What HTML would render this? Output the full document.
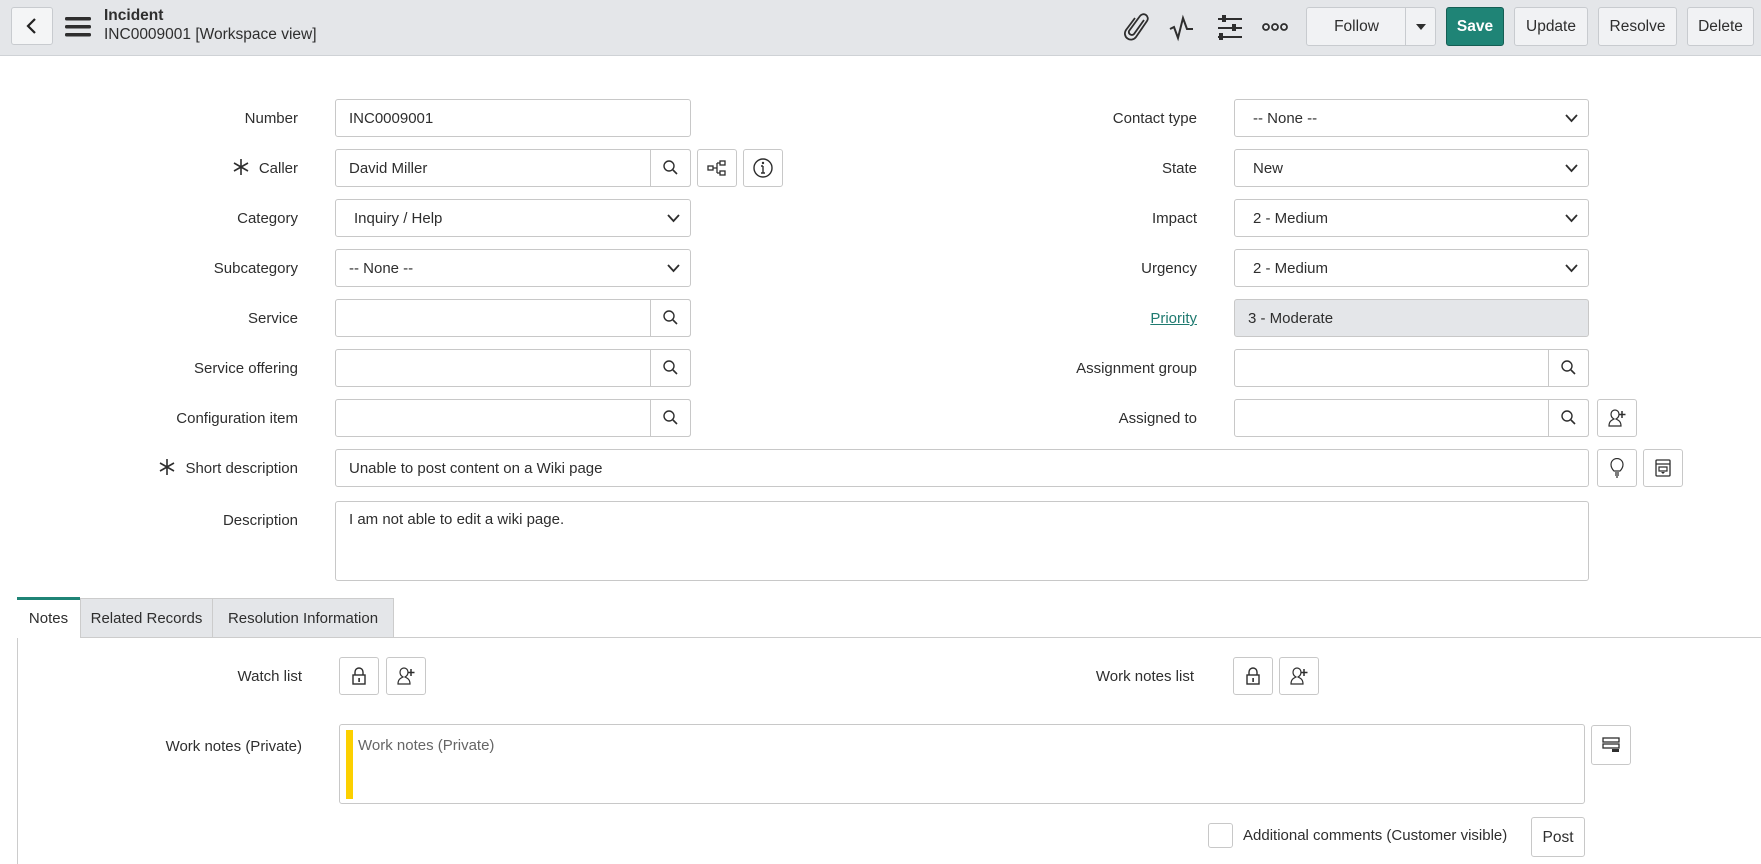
<!DOCTYPE html>
<html><head><meta charset="utf-8"><style>
*{box-sizing:border-box;margin:0;padding:0}
body{width:1761px;height:864px;overflow:hidden;background:#fff;font-family:"Liberation Sans",sans-serif;font-size:15px;color:#2e2e2e;position:relative}
.a{position:absolute}
.hdr{left:0;top:0;width:1761px;height:56px;background:#e4e6e9;border-bottom:1px solid #cfd2d6}
.btn{position:absolute;background:#f1f2f4;border:1px solid #c8cbcf;border-radius:3px;display:flex;align-items:center;justify-content:center;font-size:15.5px;color:#2e2e2e}
.lbl{position:absolute;text-align:right;height:38px;line-height:40px;font-size:15px}
.inp{position:absolute;height:38px;border:1px solid #c8c8c8;border-radius:3px;background:#fff;line-height:38px;padding-left:13px;font-size:15px}
.sb{position:absolute;top:-1px;right:-1px;width:41px;height:38px;border:1px solid #c8c8c8;border-radius:0 3px 3px 0;display:flex;align-items:center;justify-content:center}
.chev{position:absolute;right:10px;top:14px}
.ib{position:absolute;width:40px;height:38px;border:1px solid #c8c8c8;border-radius:3px;background:#fff;display:flex;align-items:center;justify-content:center}
.ast{display:inline-block;vertical-align:-2px;margin-right:10px}
</style></head><body>
<div class="a hdr"></div>
<div class="btn" style="left:11px;top:7px;width:42px;height:38px;background:#f4f5f6"><svg width="14" height="18"><path d="M10 2 L3 9 L10 16" fill="none" stroke="#222" stroke-width="2.2"/></svg></div>
<svg class="a" style="left:65px;top:17px" width="26" height="20"><rect y="0" width="26" height="3.5" rx="1.5" fill="#2e2e2e"/><rect y="8" width="26" height="3.5" rx="1.5" fill="#2e2e2e"/><rect y="16" width="26" height="3.5" rx="1.5" fill="#2e2e2e"/></svg>
<div class="a" style="left:104px;top:7px;font-weight:bold;font-size:15.5px">Incident</div>
<div class="a" style="left:104px;top:26px;font-size:15.5px">INC0009001 [Workspace view]</div>
<svg class="a" style="left:1124px;top:12px" width="28" height="30"><path d="M20 8 L10 22 a3 3 0 0 1 -5 -3 L16 4 a4 4 0 0 1 7 5 L12 25 a6 6 0 0 1 -10 -7 L11 6" fill="none" stroke="#2e2e2e" stroke-width="1.8"/></svg>
<svg class="a" style="left:1168px;top:14px" width="28" height="28"><path d="M2 15 L6 13 L10 24 L15 4 L19 15 L25 15" fill="none" stroke="#2e2e2e" stroke-width="2"/></svg>
<svg class="a" style="left:1216px;top:12px" width="28" height="30"><path d="M2 7 H26 M2 16 H26 M2 25 H26" stroke="#2e2e2e" stroke-width="2"/><rect x="6" y="3" width="4" height="7" fill="#2e2e2e"/><rect x="16" y="12" width="4" height="7" fill="#2e2e2e"/><rect x="3" y="21" width="4" height="7" fill="#2e2e2e"/></svg>
<svg class="a" style="left:1262px;top:22px" width="26" height="10"><circle cx="4" cy="5" r="3" fill="none" stroke="#2e2e2e" stroke-width="1.8"/><circle cx="13" cy="5" r="3" fill="none" stroke="#2e2e2e" stroke-width="1.8"/><circle cx="22" cy="5" r="3" fill="none" stroke="#2e2e2e" stroke-width="1.8"/></svg>
<div class="btn" style="left:1306px;top:7px;width:130px;height:39px"><div style="position:absolute;left:0;width:99px;text-align:center">Follow</div><div style="position:absolute;left:98px;top:0;bottom:0;border-left:1px solid #c8cbcf;width:31px;display:flex;align-items:center;justify-content:center"><svg width="10" height="6"><path d="M0 0 H10 L5 6Z" fill="#2e2e2e"/></svg></div></div>
<div class="btn" style="left:1446px;top:7px;width:58px;height:39px;background:#1f8476;border-color:#155e54;color:#fff;font-weight:bold">Save</div>
<div class="btn" style="left:1514px;top:7px;width:74px;height:39px">Update</div>
<div class="btn" style="left:1598px;top:7px;width:79px;height:39px">Resolve</div>
<div class="btn" style="left:1687px;top:7px;width:67px;height:39px">Delete</div>

<div class="lbl" style="left:100px;width:198px;top:99px">Number</div>
<div class="lbl" style="left:100px;width:198px;top:149px"><svg class="ast" width="16" height="16"><path d="M8 0 V16 M1 4 L15 12 M1 12 L15 4" stroke="#2e2e2e" stroke-width="1.6"/></svg>Caller</div>
<div class="lbl" style="left:100px;width:198px;top:199px">Category</div>
<div class="lbl" style="left:100px;width:198px;top:249px">Subcategory</div>
<div class="lbl" style="left:100px;width:198px;top:299px">Service</div>
<div class="lbl" style="left:100px;width:198px;top:349px">Service offering</div>
<div class="lbl" style="left:100px;width:198px;top:399px">Configuration item</div>
<div class="lbl" style="left:100px;width:198px;top:449px"><svg class="ast" width="16" height="16"><path d="M8 0 V16 M1 4 L15 12 M1 12 L15 4" stroke="#2e2e2e" stroke-width="1.6"/></svg>Short description</div>
<div class="lbl" style="left:100px;width:198px;top:501px">Description</div>

<div class="inp" style="left:335px;top:99px;width:356px">INC0009001</div>
<div class="inp" style="left:335px;top:149px;width:356px">David Miller<div class="sb"><svg width="18" height="18"><circle cx="7" cy="7" r="5" fill="none" stroke="#2e2e2e" stroke-width="1.4"/><path d="M11 11 L15 15" stroke="#2e2e2e" stroke-width="1.6"/></svg></div></div>
<div class="ib" style="left:697px;top:149px"><svg width="20" height="18"><rect x="1" y="7" width="5" height="4" fill="none" stroke="#2e2e2e" stroke-width="1.3"/><rect x="13" y="2" width="5" height="4" fill="none" stroke="#2e2e2e" stroke-width="1.3"/><rect x="13" y="12" width="5" height="4" fill="none" stroke="#2e2e2e" stroke-width="1.3"/><path d="M6 9 H10 M10 4 V14 M10 4 H13 M10 14 H13" stroke="#2e2e2e" stroke-width="1.3" fill="none"/></svg></div>
<div class="ib" style="left:743px;top:149px"><svg width="22" height="22"><circle cx="11" cy="11" r="9" fill="none" stroke="#2e2e2e" stroke-width="1.4"/><path d="M11 9 V16 M9 16 H13 M9 9 H11" stroke="#2e2e2e" stroke-width="1.4"/><circle cx="11" cy="6" r="1.2" fill="#2e2e2e"/></svg></div>
<div class="inp" style="left:335px;top:199px;width:356px;padding-left:18px">Inquiry / Help<svg class="chev" width="13" height="9"><path d="M1 1 L6.5 7 L12 1" fill="none" stroke="#2e2e2e" stroke-width="1.8"/></svg></div>
<div class="inp" style="left:335px;top:249px;width:356px">-- None --<svg class="chev" width="13" height="9"><path d="M1 1 L6.5 7 L12 1" fill="none" stroke="#2e2e2e" stroke-width="1.8"/></svg></div>
<div class="inp" style="left:335px;top:299px;width:356px"><div class="sb"><svg width="18" height="18"><circle cx="7" cy="7" r="5" fill="none" stroke="#2e2e2e" stroke-width="1.4"/><path d="M11 11 L15 15" stroke="#2e2e2e" stroke-width="1.6"/></svg></div></div>
<div class="inp" style="left:335px;top:349px;width:356px"><div class="sb"><svg width="18" height="18"><circle cx="7" cy="7" r="5" fill="none" stroke="#2e2e2e" stroke-width="1.4"/><path d="M11 11 L15 15" stroke="#2e2e2e" stroke-width="1.6"/></svg></div></div>
<div class="inp" style="left:335px;top:399px;width:356px"><div class="sb"><svg width="18" height="18"><circle cx="7" cy="7" r="5" fill="none" stroke="#2e2e2e" stroke-width="1.4"/><path d="M11 11 L15 15" stroke="#2e2e2e" stroke-width="1.6"/></svg></div></div>
<div class="inp" style="left:335px;top:449px;width:1254px">Unable to post content on a Wiki page</div>
<div class="ib" style="left:1597px;top:449px"><svg width="14" height="20"><path d="M4 13 C1 10 1 8 1 6.5 a6 6 0 0 1 12 0 C13 8 13 10 10 13 Z M5 15 H9 M5 17 H9 M6 19 H8" fill="none" stroke="#2e2e2e" stroke-width="1.2"/></svg></div>
<div class="ib" style="left:1643px;top:449px"><svg width="16" height="18"><rect x="1" y="1" width="14" height="16" rx="1" fill="none" stroke="#2e2e2e" stroke-width="1.3"/><path d="M1 5 H15 M4 8 H12 V12 H4Z" fill="none" stroke="#2e2e2e" stroke-width="1.2"/><path d="M6 13 H10 L8 15Z" fill="#2e2e2e"/></svg></div>
<div class="inp" style="left:335px;top:501px;width:1254px;height:80px;line-height:22px;padding-top:7px">I am not able to edit a wiki page.</div>

<div class="lbl" style="left:1000px;width:197px;top:99px">Contact type</div>
<div class="lbl" style="left:1000px;width:197px;top:149px">State</div>
<div class="lbl" style="left:1000px;width:197px;top:199px">Impact</div>
<div class="lbl" style="left:1000px;width:197px;top:249px">Urgency</div>
<div class="lbl" style="left:1000px;width:197px;top:299px;color:#1f7a70;text-decoration:underline">Priority</div>
<div class="lbl" style="left:1000px;width:197px;top:349px">Assignment group</div>
<div class="lbl" style="left:1000px;width:197px;top:399px">Assigned to</div>
<div class="inp" style="left:1234px;top:99px;width:355px;padding-left:18px">-- None --<svg class="chev" width="13" height="9"><path d="M1 1 L6.5 7 L12 1" fill="none" stroke="#2e2e2e" stroke-width="1.8"/></svg></div>
<div class="inp" style="left:1234px;top:149px;width:355px;padding-left:18px">New<svg class="chev" width="13" height="9"><path d="M1 1 L6.5 7 L12 1" fill="none" stroke="#2e2e2e" stroke-width="1.8"/></svg></div>
<div class="inp" style="left:1234px;top:199px;width:355px;padding-left:18px">2 - Medium<svg class="chev" width="13" height="9"><path d="M1 1 L6.5 7 L12 1" fill="none" stroke="#2e2e2e" stroke-width="1.8"/></svg></div>
<div class="inp" style="left:1234px;top:249px;width:355px;padding-left:18px">2 - Medium<svg class="chev" width="13" height="9"><path d="M1 1 L6.5 7 L12 1" fill="none" stroke="#2e2e2e" stroke-width="1.8"/></svg></div>
<div class="inp" style="left:1234px;top:299px;width:355px;background:#e4e6e9">3 - Moderate</div>
<div class="inp" style="left:1234px;top:349px;width:355px"><div class="sb"><svg width="18" height="18"><circle cx="7" cy="7" r="5" fill="none" stroke="#2e2e2e" stroke-width="1.4"/><path d="M11 11 L15 15" stroke="#2e2e2e" stroke-width="1.6"/></svg></div></div>
<div class="inp" style="left:1234px;top:399px;width:355px"><div class="sb"><svg width="18" height="18"><circle cx="7" cy="7" r="5" fill="none" stroke="#2e2e2e" stroke-width="1.4"/><path d="M11 11 L15 15" stroke="#2e2e2e" stroke-width="1.6"/></svg></div></div>
<div class="ib" style="left:1597px;top:399px"><svg width="20" height="18"><path d="M2 17 C2 12 5 11 7 10 C5 9 4 7 4 5 a4 4 0 0 1 8 0 C12 7 11 9 9 10 C11 11 14 12 14 17 Z" fill="none" stroke="#2e2e2e" stroke-width="1.2"/><path d="M15 2 V9 M11.5 5.5 H18.5" stroke="#2e2e2e" stroke-width="1.5"/></svg></div>

<div class="a" style="left:17px;top:637px;width:1744px;border-top:1px solid #ccc"></div>
<div class="a" style="left:17px;top:597px;width:1px;height:267px;background:#ccc"></div>
<div class="a" style="left:17px;top:597px;width:63px;height:41px;background:#fff;border-top:3px solid #1f8476;text-align:center;line-height:37px">Notes</div>
<div class="a" style="left:80px;top:598px;width:133px;height:39px;background:#e4e6e9;border:1px solid #ccc;border-bottom:none;text-align:center;line-height:39px">Related Records</div>
<div class="a" style="left:212px;top:598px;width:182px;height:39px;background:#e4e6e9;border:1px solid #ccc;border-bottom:none;text-align:center;line-height:39px">Resolution Information</div>

<div class="lbl" style="left:100px;width:202px;top:657px">Watch list</div>
<div class="ib" style="left:339px;top:657px"><svg width="16" height="18"><path d="M4 8 V5 a4 4 0 0 1 8 0 V8" fill="none" stroke="#2e2e2e" stroke-width="1.4"/><rect x="2" y="8" width="12" height="9" fill="none" stroke="#2e2e2e" stroke-width="1.4"/><rect x="7.3" y="11" width="1.6" height="4" fill="#2e2e2e"/></svg></div>
<div class="ib" style="left:386px;top:657px"><svg width="20" height="18"><path d="M2 17 C2 12 5 11 7 10 C5 9 4 7 4 5 a4 4 0 0 1 8 0 C12 7 11 9 9 10 C11 11 14 12 14 17 Z" fill="none" stroke="#2e2e2e" stroke-width="1.2"/><path d="M15 2 V9 M11.5 5.5 H18.5" stroke="#2e2e2e" stroke-width="1.5"/></svg></div>
<div class="lbl" style="left:1000px;width:194px;top:657px">Work notes list</div>
<div class="ib" style="left:1233px;top:657px"><svg width="16" height="18"><path d="M4 8 V5 a4 4 0 0 1 8 0 V8" fill="none" stroke="#2e2e2e" stroke-width="1.4"/><rect x="2" y="8" width="12" height="9" fill="none" stroke="#2e2e2e" stroke-width="1.4"/><rect x="7.3" y="11" width="1.6" height="4" fill="#2e2e2e"/></svg></div>
<div class="ib" style="left:1279px;top:657px"><svg width="20" height="18"><path d="M2 17 C2 12 5 11 7 10 C5 9 4 7 4 5 a4 4 0 0 1 8 0 C12 7 11 9 9 10 C11 11 14 12 14 17 Z" fill="none" stroke="#2e2e2e" stroke-width="1.2"/><path d="M15 2 V9 M11.5 5.5 H18.5" stroke="#2e2e2e" stroke-width="1.5"/></svg></div>

<div class="lbl" style="left:100px;width:202px;top:727px">Work notes (Private)</div>
<div class="a" style="left:339px;top:724px;width:1246px;height:80px;border:1px solid #c8c8c8;border-radius:3px"></div>
<div class="a" style="left:346px;top:730px;width:7px;height:69px;background:#fcd000"></div>
<div class="a" style="left:358px;top:737px;color:#666">Work notes (Private)</div>
<div class="ib" style="left:1591px;top:725px;height:40px"><svg width="18" height="16"><rect x="1" y="1" width="16" height="4" fill="none" stroke="#2e2e2e" stroke-width="1.3"/><rect x="1" y="7" width="16" height="4" fill="none" stroke="#2e2e2e" stroke-width="1.3"/><rect x="10" y="12" width="7" height="3" fill="#2e2e2e"/></svg></div>
<div class="a" style="left:1208px;top:823px;width:25px;height:25px;border:1px solid #c8c8c8;border-radius:3px"></div>
<div class="a" style="left:1243px;top:827px">Additional comments (Customer visible)</div>
<div class="ib" style="left:1531px;top:817px;width:54px;height:40px;font-size:15.5px;padding-top:2px">Post</div>
</body></html>
